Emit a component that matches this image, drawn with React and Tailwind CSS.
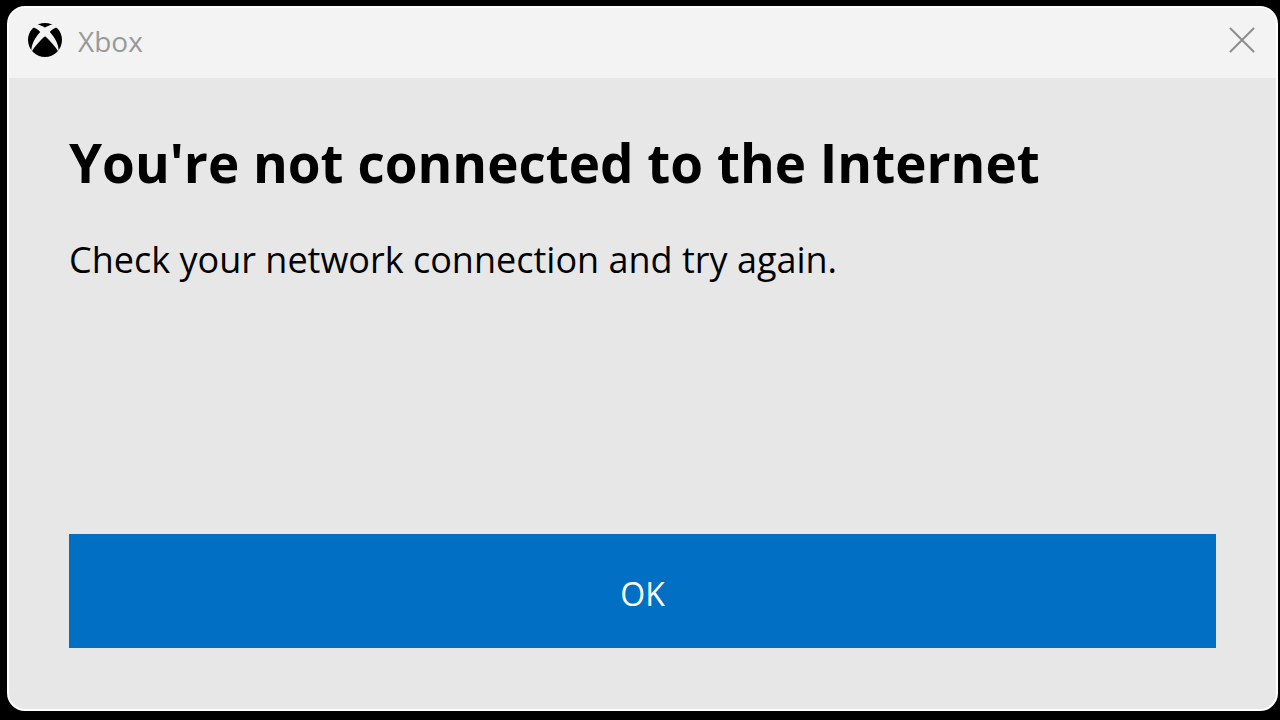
import React from "react";

// Xbox sphere: black disc with the curved X cut out of it
function XboxLogo() {
  return (
    <svg viewBox="0 0 34 34" aria-hidden="true" className="h-[34px] w-[34px] shrink-0">
      <circle cx="17" cy="17" r="17" fill="#000000" />
      <path
        fill="#f3f3f3"
        d="M4 4.5C6 1 8 .5 10 1.500C12 2 14.500 3.200 17 4.600C19.500 3.200 22 2 24 1.500C26 .5 28 1 30 4.500C27.500 4.300 24.500 5.800 21.800 9C26.500 14 31.500 22 30.500 29C28 24.500 22.500 18 17 13.200C11.500 18 6 24.500 3.500 29C2.500 22 7.500 14 12.200 9C9.500 5.800 6.500 4.300 4 4.500Z"
      />
    </svg>
  );
}

function TitleBar({ title }) {
  return (
    <header className="flex h-[70px] items-center justify-between bg-[#f3f3f3] pl-[19px] pr-[21px] pb-[6px]">
      <div className="flex items-center gap-4">
        <XboxLogo />
        <span className="pt-[2px] text-[28px] leading-8 text-[#999999]">{title}</span>
      </div>
      <button type="button" aria-label="Close" className="text-[#8c8c8c]">
        <svg viewBox="0 0 26 26" fill="none" stroke="currentColor" strokeWidth="2" strokeLinecap="round" className="block h-[26px] w-[26px]">
          <path d="M1.5 1.5l23 23M24.5 1.5l-23 23" />
        </svg>
      </button>
    </header>
  );
}

export default function App() {
  return (
    <div className="flex min-h-screen bg-black pt-[6px] pr-[2px] pb-[9px] pl-[7px] font-['Open_Sans','Noto_Sans',sans-serif] text-black">
      <div role="dialog" aria-labelledby="dialog-title" className="flex flex-1 flex-col overflow-hidden rounded-[18px] border-2 border-white bg-[#e7e7e7]">
        <TitleBar title="Xbox" />

        <main className="flex flex-1 flex-col px-[60px] pt-12 pb-[61px]">
          <h1 id="dialog-title" className="text-[53px] leading-[74px] font-bold">
            You're not connected to the Internet
          </h1>
          <p className="mt-[34px] text-[36px] leading-[52px]">
            Check your network connection and try again.
          </p>
          <button type="button" className="mt-auto h-[114px] w-full bg-[#006fc4] pt-[6px] text-[32px] leading-10 text-white">
            OK
          </button>
        </main>
      </div>
    </div>
  );
}
